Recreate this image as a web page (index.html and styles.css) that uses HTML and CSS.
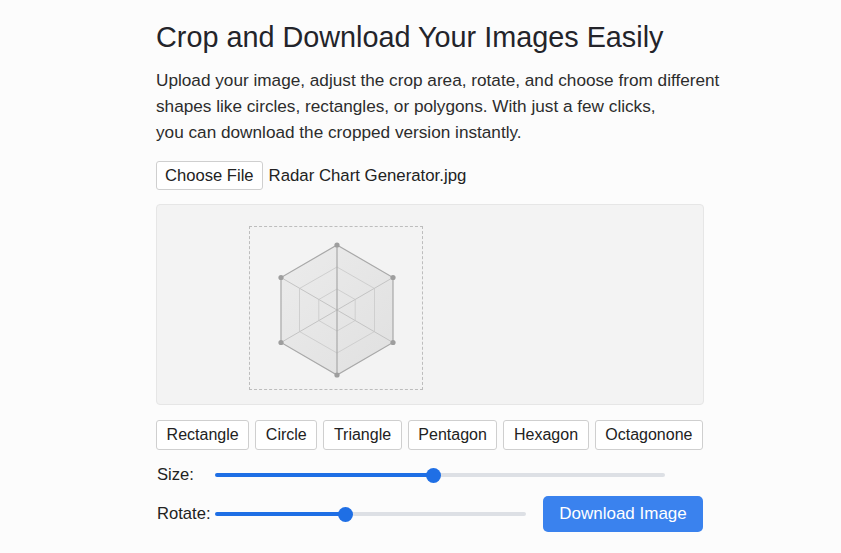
FILE: index.html
```html
<!DOCTYPE html>
<html lang="en">
<head>
  <meta charset="UTF-8">
  <meta name="viewport" content="width=device-width, initial-scale=1.0">
  <title>Image Cropper</title>
  <link rel="stylesheet" href="styles.css">
</head>
<body>
  <div class="container">
    <h1>Crop and Download Your Images Easily</h1>
    <p class="intro">
      Upload your image, adjust the crop area, rotate, and choose from different<br>
      shapes like circles, rectangles, or polygons. With just a few clicks,<br>
      you can download the cropped version instantly.
    </p>

    <div class="file-row">
      <button class="btn">Choose File</button>
      <span class="file-name">Radar Chart Generator.jpg</span>
    </div>

    <div class="canvas">
      <div class="crop-box">
        <svg width="172" height="162" viewBox="0 0 172 162">
          <defs>
            <linearGradient id="fill" x1="0" y1="0" x2="1" y2="1">
              <stop offset="0" stop-color="#ececec"/>
              <stop offset="1" stop-color="#e0e0e0"/>
            </linearGradient>
          </defs>
          <polygon points="87,18 143,50.5 143,115.5 87,148 31,115.5 31,50.5" fill="url(#fill)" stroke="#a8a8a8" stroke-width="1.2"/>
          <polygon points="87,40 124.5,61.5 124.5,104.5 87,126 49.5,104.5 49.5,61.5" fill="none" stroke="#cfcfcf" stroke-width="1"/>
          <polygon points="87,62 105.2,72.5 105.2,93.5 87,104 68.8,93.5 68.8,72.5" fill="none" stroke="#cfcfcf" stroke-width="1"/>
          <line x1="31" y1="50.5" x2="143" y2="115.5" stroke="#c4c4c4" stroke-width="1"/>
          <line x1="143" y1="50.5" x2="31" y2="115.5" stroke="#c4c4c4" stroke-width="1"/>
          <line x1="87" y1="18" x2="87" y2="148" stroke="#a8a8a8" stroke-width="1.2"/>
          <g fill="#9e9e9e">
            <circle cx="87" cy="18" r="2.6"/>
            <circle cx="143" cy="50.5" r="2.6"/>
            <circle cx="143" cy="115.5" r="2.6"/>
            <circle cx="87" cy="148" r="2.6"/>
            <circle cx="31" cy="115.5" r="2.6"/>
            <circle cx="31" cy="50.5" r="2.6"/>
          </g>
        </svg>
      </div>
    </div>

    <div class="shapes">
      <button class="btn">Rectangle</button>
      <button class="btn">Circle</button>
      <button class="btn">Triangle</button>
      <button class="btn">Pentagon</button>
      <button class="btn">Hexagon</button>
      <button class="btn">Octagonone</button>
    </div>

    <div class="control size-row">
      <label for="size">Size:</label>
      <input type="range" id="size" class="slider slider-long" min="0" max="100" step="0.5" value="48.5" style="--fill: 48.5%">
    </div>

    <div class="control rotate-row">
      <label for="rotate">Rotate:</label>
      <input type="range" id="rotate" class="slider slider-short" min="0" max="360" value="150" style="--fill: 42%">
      <button class="download">Download Image</button>
    </div>
  </div>
</body>
</html>
```
FILE: styles.css
```css
body {
  margin: 0;
  background: #fcfcfc;
  font-family: "Liberation Sans", Arial, sans-serif;
  color: #2a2a2a;
}
.container {
  padding: 20px 0 0 156px;
}
h1 {
  margin: 0;
  font-size: 28.8px;
  line-height: 34px;
  font-weight: normal;
  color: #23242a;
}
.intro {
  margin: 13px 0 0;
  font-size: 17.2px;
  line-height: 26px;
  color: #2c2c2c;
}
.btn {
  font-family: inherit;
  font-size: 16.6px;
  color: #222;
  background: #fff;
  border: 1px solid #cfcfcf;
  border-radius: 3px;
  padding: 0 8px;
  height: 29px;
  cursor: pointer;
}
.file-row {
  display: flex;
  align-items: center;
  gap: 6px;
  margin-top: 16px;
}
.file-name {
  font-size: 16.8px;
  color: #222;
}
.canvas {
  box-sizing: border-box;
  width: 548px;
  height: 201px;
  margin-top: 14px;
  background: #f3f3f3;
  border: 1px solid #e6e6e6;
  border-radius: 4px;
  display: flex;
  align-items: flex-start;
  padding-left: 92px;
}
.crop-box {
  margin-top: 21px;
  width: 172px;
  height: 162px;
  border: 1px dashed #bdbdbd;
}
.crop-box svg {
  display: block;
}
.shapes {
  display: flex;
  gap: 6px;
  margin-top: 15px;
}
.shapes .btn {
  height: 30px;
  font-size: 16px;
  padding: 0 9.6px;
}
.control {
  display: flex;
  align-items: center;
}
.control label {
  width: 58px;
  font-size: 16.6px;
  color: #222;
  margin-left: 1px;
}
.size-row {
  margin-top: 14px;
  height: 22px;
}
.rotate-row {
  margin-top: 10px;
}
.slider {
  -webkit-appearance: none;
  appearance: none;
  margin: 0;
  height: 16px;
  background: transparent;
}
.slider-long {
  width: 450px;
}
.slider-short {
  width: 311px;
}
.slider::-webkit-slider-runnable-track {
  height: 4px;
  border-radius: 2px;
  background: linear-gradient(to right, #1f6fe5 var(--fill), #dde0e5 var(--fill));
}
.slider::-webkit-slider-thumb {
  -webkit-appearance: none;
  width: 15px;
  height: 15px;
  margin-top: -5.5px;
  border-radius: 50%;
  background: #1f6fe5;
  border: none;
}
.download {
  margin-left: 17px;
  width: 160px;
  height: 36px;
  font-family: inherit;
  font-size: 17px;
  color: #fff;
  background: #3a82ee;
  border: none;
  border-radius: 5px;
  cursor: pointer;
}
```
